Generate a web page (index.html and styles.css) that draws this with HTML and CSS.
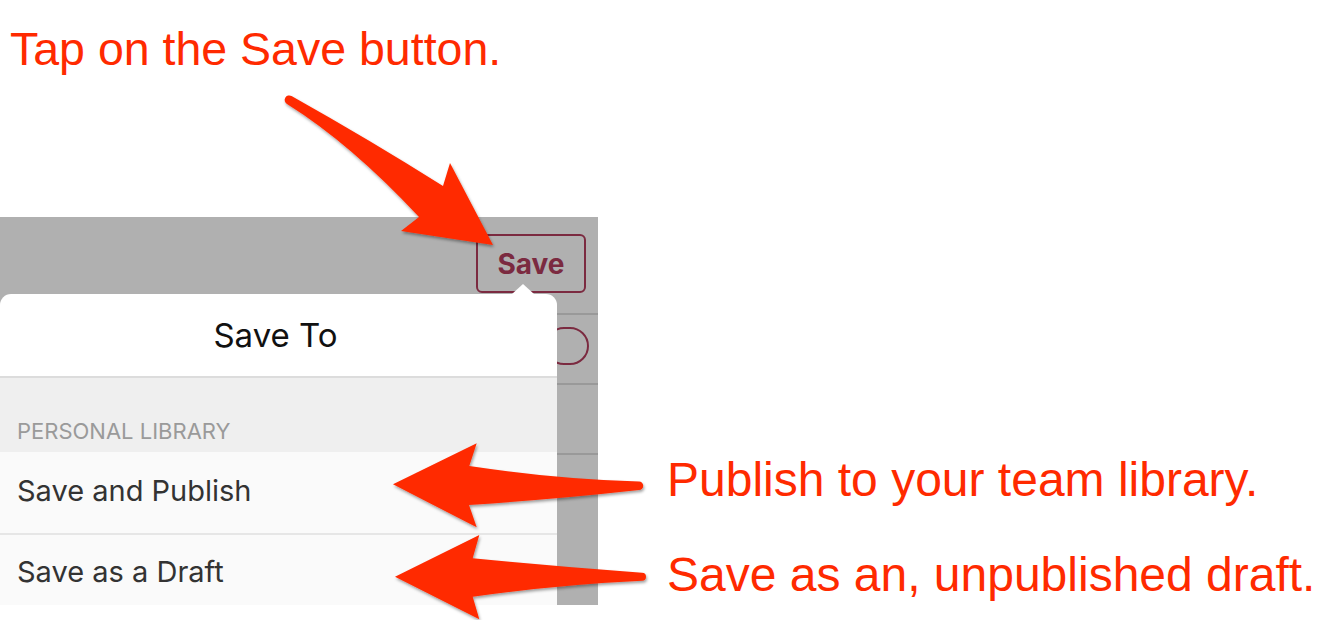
FILE: index.html
```html
<!DOCTYPE html>
<html lang="en">
<head>
<meta charset="utf-8">
<title>Save To</title>
<link rel="stylesheet" href="styles.css">
</head>
<body>
<div class="page">
  <h1 class="title">Tap on the Save button.</h1>
  <div class="stage">
    <div class="app">
      <div class="toolbar"><button class="save-btn" type="button">Save</button></div>
      <div class="list-row row-toggle"><span class="pill"></span></div>
      <div class="list-row"></div>
      <div class="list-row list-rest"></div>
      <div class="popover">
        <div class="pop-head">Save To</div>
        <div class="pop-section">PERSONAL LIBRARY</div>
        <div class="pop-item item-publish">Save and Publish</div>
        <div class="pop-item item-draft">Save as a Draft</div>
      </div>
    </div>
    <div class="notes">
      <p class="note">Publish to your team library.</p>
      <p class="note">Save as an, unpublished draft.</p>
    </div>
  </div>
  <svg class="arrows" width="1340" height="620" viewBox="0 0 1340 620" xmlns="http://www.w3.org/2000/svg">
    <defs>
      <filter id="shadow" x="-10%" y="-10%" width="130%" height="130%">
        <feDropShadow dx="1" dy="2" stdDeviation="1.6" flood-color="#000" flood-opacity="0.38"/>
      </filter>
    </defs>
    <g class="arrow" filter="url(#shadow)">
      <path d="M287,104 A4.5 4.5 0 0 1 291.5,96 Q370,140 443,186 L450,163 L493,245 L401,231 L419,217 Q351,144 287,104 Z"/>
      <path d="M639,481.5 A4.25 4.25 0 0 1 639,490 Q558,499 469,505 L476.7,527.3 L393,484.3 L476.7,443.3 L469.3,466 Q556,479 639,481.5 Z"/>
      <path d="M642,572.7 A4 4 0 0 1 642,580.7 Q556.6,584.7 472.7,596.7 L479.3,619.3 L395,576.7 L479.3,535 L472.7,558.3 Q556.6,566.5 642,572.7 Z"/>
    </g>
  </svg>
</div>
</body>
</html>
```
FILE: styles.css
```css
html, body {
  margin: 0;
  padding: 0;
  background: #ffffff;
}

.page {
  position: relative;
  width: 1340px;
  height: 620px;
  overflow: hidden;
}

.title {
  margin: 0;
  padding: 26px 0 0 10px;
  height: 46px;
  font-family: "Liberation Sans", Arial, sans-serif;
  font-weight: 400;
  font-size: 46.5px;
  line-height: 46px;
  color: #ff2a00;
}

.stage {
  display: flex;
  align-items: flex-start;
  margin-top: 145px;
}

.app {
  position: relative;
  width: 598px;
  height: 388px;
  background: #b0b0b0;
  display: flex;
  flex-direction: column;
  font-family: Inter, "Noto Sans", sans-serif;
  flex-shrink: 0;
}

.toolbar {
  height: 96px;
  display: flex;
  justify-content: flex-end;
  align-items: flex-start;
  padding: 17px 12px 0 0;
  box-sizing: border-box;
}

.save-btn {
  width: 110px;
  height: 59px;
  border: 2px solid #7b2a40;
  border-radius: 6px;
  background: transparent;
  color: #7b2a40;
  font-family: Inter, "Noto Sans", sans-serif;
  font-weight: 700;
  font-size: 28px;
  padding: 0;
  margin: 0;
  line-height: 1;
}

.list-row {
  height: 68px;
  border-top: 2px solid #999999;
  display: flex;
  justify-content: flex-end;
  align-items: flex-start;
}

.list-rest {
  flex: 1;
  height: auto;
}

.row-toggle {
  padding: 12px 9px 0 0;
  box-sizing: content-box;
  height: 56px;
}

.pill {
  display: block;
  width: 44px;
  height: 38px;
  box-sizing: border-box;
  border: 2.5px solid #7b2a40;
  border-radius: 19px;
}

.popover {
  position: absolute;
  left: 0;
  top: 77px;
  bottom: 0;
  width: 557px;
  background: #ffffff;
  border-radius: 11px 11px 0 0;
  display: flex;
  flex-direction: column;
}

.popover::before {
  content: "";
  position: absolute;
  left: 512px;
  top: -10px;
  width: 0;
  height: 0;
  border-left: 11px solid transparent;
  border-right: 11px solid transparent;
  border-bottom: 10px solid #ffffff;
}

.pop-head {
  height: 82px;
  border-bottom: 2px solid #dcdcdc;
  display: flex;
  align-items: center;
  justify-content: center;
  padding-right: 6px;
  font-size: 33px;
  line-height: 33px;
  color: #111111;
  border-radius: 11px 11px 0 0;
}

.pop-section {
  height: 74px;
  box-sizing: border-box;
  padding: 42px 0 0 17px;
  background: #efefef;
  font-size: 22px;
  line-height: 22px;
  color: #9a9a9a;
}

.pop-item {
  box-sizing: border-box;
  padding-left: 17px;
  background: #fafafa;
  font-size: 29px;
  line-height: 28px;
  color: #333333;
}

.item-publish {
  height: 83px;
  padding-top: 25px;
  border-bottom: 2px solid #e6e6e6;
}

.item-draft {
  flex: 1;
  padding-top: 23px;
}

.notes {
  display: flex;
  flex-direction: column;
  gap: 48px;
  padding: 239px 0 0 69px;
}

.note {
  margin: 0;
  font-family: "Liberation Sans", Arial, sans-serif;
  font-size: 48px;
  line-height: 47px;
  color: #ff2a00;
  white-space: nowrap;
}

.arrows {
  position: absolute;
  left: 0;
  top: 0;
  pointer-events: none;
}

.arrow path {
  fill: #ff2a00;
}
```
